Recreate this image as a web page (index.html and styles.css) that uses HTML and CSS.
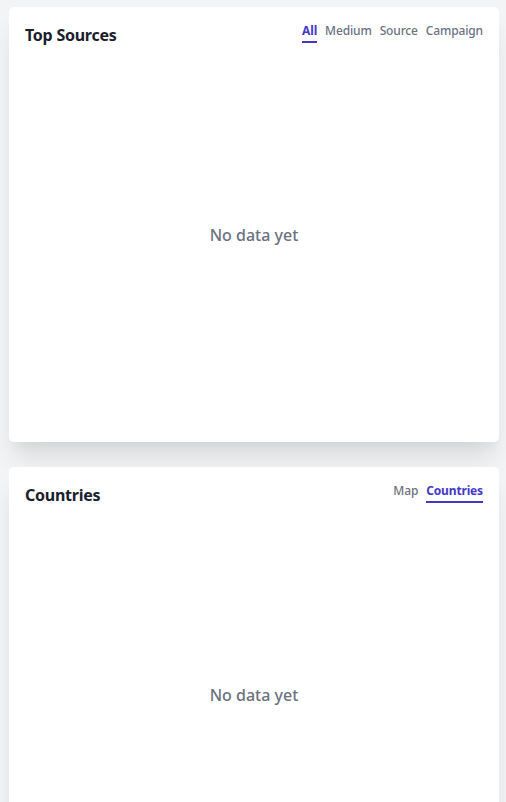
FILE: index.html
```html
<!DOCTYPE html>
<html lang="en">
<head>
<meta charset="utf-8">
<title>Dashboard</title>
<link rel="stylesheet" href="styles.css">
</head>
<body>
<main class="stack">
  <section class="card">
    <header class="card-head">
      <h3 class="card-title">Top Sources</h3>
      <nav class="tabs">
        <span class="tab tab-active">All</span>
        <span class="tab">Medium</span>
        <span class="tab">Source</span>
        <span class="tab">Campaign</span>
      </nav>
    </header>
    <div class="empty">No data yet</div>
  </section>
  <section class="card">
    <header class="card-head">
      <h3 class="card-title">Countries</h3>
      <nav class="tabs">
        <span class="tab">Map</span>
        <span class="tab tab-active">Countries</span>
      </nav>
    </header>
    <div class="empty">No data yet</div>
  </section>
</main>
</body>
</html>
```

FILE: styles.css
```css
html, body {
  margin: 0;
  padding: 0;
  overflow: hidden;
}
body {
  background: #f3f4f6;
  font-family: "Noto Sans", "Open Sans", sans-serif;
  color: #1f2937;
}
.stack {
  display: flex;
  flex-direction: column;
  gap: 25px;
  padding: 7px 7px 0 9px;
}
.card {
  width: 490px;
  box-sizing: border-box;
  min-height: 435px;
  padding: 16px;
  background: #fff;
  border-radius: 5px;
  box-shadow: 0 20px 25px -5px rgba(0,0,0,0.1), 0 10px 10px -5px rgba(0,0,0,0.04);
  display: flex;
  flex-direction: column;
}
.card-head {
  display: flex;
  justify-content: space-between;
  align-items: flex-start;
}
.card-title {
  margin: 0;
  font-size: 16px;
  line-height: 24px;
  font-weight: 700;
  letter-spacing: -0.25px;
  color: #1a202c;
}
.tabs {
  display: flex;
  gap: 8px;
  font-size: 12px;
  line-height: 16px;
  font-weight: 500;
  letter-spacing: -0.15px;
  color: #6b7280;
}
.tab {
  padding-bottom: 2px;
  border-bottom: 2px solid transparent;
}
.tab-active {
  color: #4338ca;
  font-weight: 700;
  border-bottom-color: #4338ca;
}
.empty {
  flex: 1;
  display: flex;
  align-items: center;
  justify-content: center;
  padding-bottom: 4px;
  font-size: 16px;
  font-weight: 500;
  color: #6b7280;
}
```
